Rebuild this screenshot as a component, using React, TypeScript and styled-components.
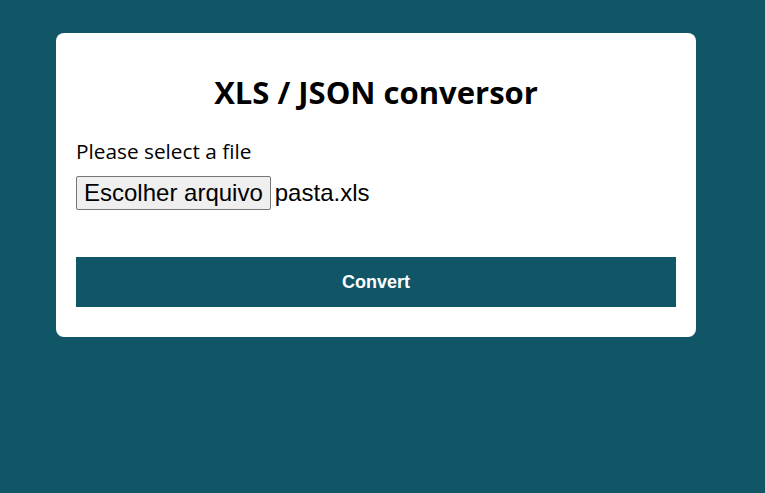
import React from "react";
import styled, { createGlobalStyle } from "styled-components";

const Global = createGlobalStyle`
  html, body { margin: 0; padding: 0; }
  body {
    background: #115667;
    min-height: 493px;
    font-family: "Open Sans", "Liberation Sans", sans-serif;
  }
`;

const Page = styled.main`
  padding: 33px 69px 0 56px;
  box-sizing: border-box;
`;

const Card = styled.section`
  width: 640px;
  box-sizing: border-box;
  background: #ffffff;
  border-radius: 8px;
  padding: 38px 20px 30px;
  display: flex;
  flex-direction: column;
`;

const Title = styled.h1`
  margin: 0 0 24px;
  text-align: center;
  font-family: "Open Sans", sans-serif;
  font-weight: 700;
  font-size: 31px;
  color: #000;
`;

const Label = styled.label`
  font-family: "Open Sans", sans-serif;
  font-size: 20.8px;
  color: #000;
  margin-bottom: 11px;
`;

const FileRow = styled.div`
  display: flex;
  align-items: center;
  font-family: "Liberation Sans", Arial, sans-serif;
  font-size: 24px;
  color: #000;
  margin-bottom: 47px;
`;

const PickButton = styled.button`
  font-family: "Liberation Sans", Arial, sans-serif;
  font-size: 24px;
  color: #000;
  background: #efefef;
  border: 1px solid #767676;
  border-radius: 2px;
  padding: 1px 7px;
  margin-right: 4px;
  height: 34px;
  line-height: 1;
`;

const FileName = styled.span``;

const ConvertButton = styled.button`
  height: 50px;
  width: 100%;
  border: none;
  background: #115667;
  color: #ffffff;
  font-family: "Liberation Sans Narrow", "Liberation Sans", Arial, sans-serif;
  font-weight: 700;
  font-size: 18px;
  cursor: pointer;
`;

export default function App() {
  return (
    <>
      <Global />
      <Page>
        <Card>
          <Title>XLS / JSON conversor</Title>
          <Label>Please select a file</Label>
          <FileRow>
            <PickButton type="button">Escolher arquivo</PickButton>
            <FileName>pasta.xls</FileName>
          </FileRow>
          <ConvertButton type="button">Convert</ConvertButton>
        </Card>
      </Page>
    </>
  );
}
